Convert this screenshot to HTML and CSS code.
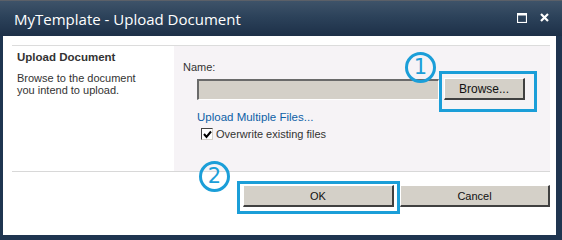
FILE: index.html
```html
<!DOCTYPE html>
<html lang="en">
<head>
  <meta charset="UTF-8">
  <title>MyTemplate - Upload Document</title>
  <link rel="stylesheet" href="styles.css">
</head>
<body>
<div class="window">
  <div class="titlebar">
    <span class="title">MyTemplate - Upload Document</span>
    <div class="title_icons">
      <svg class="icon" width="10" height="10" viewBox="0 0 10 10">
        <rect x="0.5" y="0.5" width="9" height="9" fill="none" stroke="#fff" stroke-width="1.2"/>
        <rect x="0" y="0" width="10" height="2.5" fill="#fff"/>
      </svg>
      <svg class="icon" width="9" height="9" viewBox="0 0 9 9">
        <path d="M1 1 L8 8 M8 1 L1 8" stroke="#fff" stroke-width="2.2"/>
      </svg>
    </div>
  </div>

  <div class="content">
    <div class="section">
      <div class="section_info">
        <h3>Upload Document</h3>
        <p>Browse to the document<br>you intend to upload.</p>
      </div>
      <div class="section_body">
        <label>Name:</label>
        <div class="file_row">
          <div class="file_input"></div>
          <button type="button" class="btn browse">Browse...</button>
        </div>
        <a href="#" class="multi">Upload Multiple Files...</a>
        <div class="check_row">
          <span class="checkbox">
            <svg width="9" height="9" viewBox="0 0 9 9"><path d="M1 4 L3.5 7 L8 1.5" stroke="#000" stroke-width="2" fill="none"/></svg>
          </span>
          <span>Overwrite existing files</span>
        </div>
      </div>
    </div>

    <div class="buttons">
      <button type="button" class="btn ok">OK</button>
      <button type="button" class="btn cancel">Cancel</button>
    </div>
  </div>

  <!-- step callouts -->
  <span class="step step1">1</span>
  <span class="callout callout1"></span>
  <span class="step step2">2</span>
  <span class="callout callout2"></span>
</div>
</body>
</html>
```

FILE: styles.css
```css
* {
  box-sizing: border-box;
}

body {
  margin: 0;
  padding: 0;
  background: #23384f;
  font-family: 'Liberation Sans', Arial, sans-serif;
}

.window {
  position: relative;
  width: 562px;
  height: 240px;
  background: #1f3550;
  border-top: 1px solid #5b6068;
  padding: 0 6px 5px 3px;
  display: flex;
  flex-direction: column;
}

.titlebar {
  height: 35px;
  margin: 0 -6px 0 -3px;
  padding: 0 13px 0 14px;
  background: linear-gradient(#3e5369, #2c425a 45%, #1d3048);
  display: flex;
  align-items: center;
  justify-content: space-between;
}

.title {
  color: #fff;
  font-family: 'Open Sans', 'DejaVu Sans', sans-serif;
  font-size: 15px;
}

.title_icons {
  display: flex;
  align-items: center;
  gap: 13px;
  padding-bottom: 2px;
}

.content {
  flex: 1;
  background: #fff;
  padding: 9px 6px 0 9px;
}

.section {
  display: flex;
  border-top: 1px solid #dcdcdc;
  border-bottom: 1px solid #d8d8d8;
  height: 127px;
}

.section_info {
  width: 162px;
  padding: 5px 5px 0 5px;
  color: #333;
  font-size: 11px;
}

.section_info h3 {
  margin: 0 0 9px 0;
  font-size: 11.5px;
  font-weight: bold;
}

.section_info p {
  margin: 0;
  line-height: 12px;
}

.section_body {
  flex: 1;
  background: #f6f3f6;
  padding: 15px 0 0 9px;
  font-size: 11px;
  color: #333;
}

.section_body label {
  display: block;
  height: 14px;
}

.file_row {
  display: flex;
  align-items: center;
  gap: 5px;
  margin: 3px 0 0 14px;
}

.file_input {
  width: 242px;
  height: 21px;
  background: #d4d0c8;
  border-top: 2px solid #6a6a6a;
  border-left: 2px solid #6a6a6a;
  border-bottom: 1px solid #fff;
  border-right: 1px solid #fff;
}

.btn {
  height: 22px;
  background: #d4d0c8;
  border-top: 1px solid #fff;
  border-left: 1px solid #fff;
  border-right: 2px solid #404040;
  border-bottom: 2px solid #404040;
  font-family: 'Liberation Sans', Arial, sans-serif;
  font-size: 11px;
  color: #111;
  padding: 0;
}

.browse {
  width: 81px;
  font-size: 12px;
}

.multi {
  display: block;
  margin: 11px 0 0 14px;
  color: #0d5fa6;
  text-decoration: none;
  font-size: 11.5px;
}

.check_row {
  display: flex;
  align-items: center;
  gap: 3px;
  margin: 5px 0 0 18px;
}

.checkbox {
  width: 12px;
  height: 12px;
  background: #fff;
  border-top: 1px solid #404040;
  border-left: 1px solid #404040;
  border-bottom: 1px solid #d4d0c8;
  border-right: 1px solid #d4d0c8;
  display: flex;
  align-items: center;
  justify-content: center;
}

.buttons {
  display: flex;
  justify-content: flex-end;
  gap: 6px;
  margin-top: 13px;
}

.ok {
  width: 151px;
}

.cancel {
  width: 150px;
}

/* annotation overlays */
.step {
  position: absolute;
  width: 31px;
  height: 31px;
  border: 3px solid #1b9ed8;
  border-radius: 50%;
  color: #1b9ed8;
  font-family: 'DejaVu Sans', sans-serif;
  font-size: 21px;
  line-height: 25px;
  text-align: center;
}

.step1 {
  left: 405px;
  top: 51px;
}

.step2 {
  left: 199px;
  top: 160px;
}

.callout {
  position: absolute;
  border: 3px solid #1b9ed8;
}

.callout1 {
  left: 439px;
  top: 70px;
  width: 98px;
  height: 41px;
}

.callout2 {
  left: 237px;
  top: 180px;
  width: 163px;
  height: 33px;
}
```
